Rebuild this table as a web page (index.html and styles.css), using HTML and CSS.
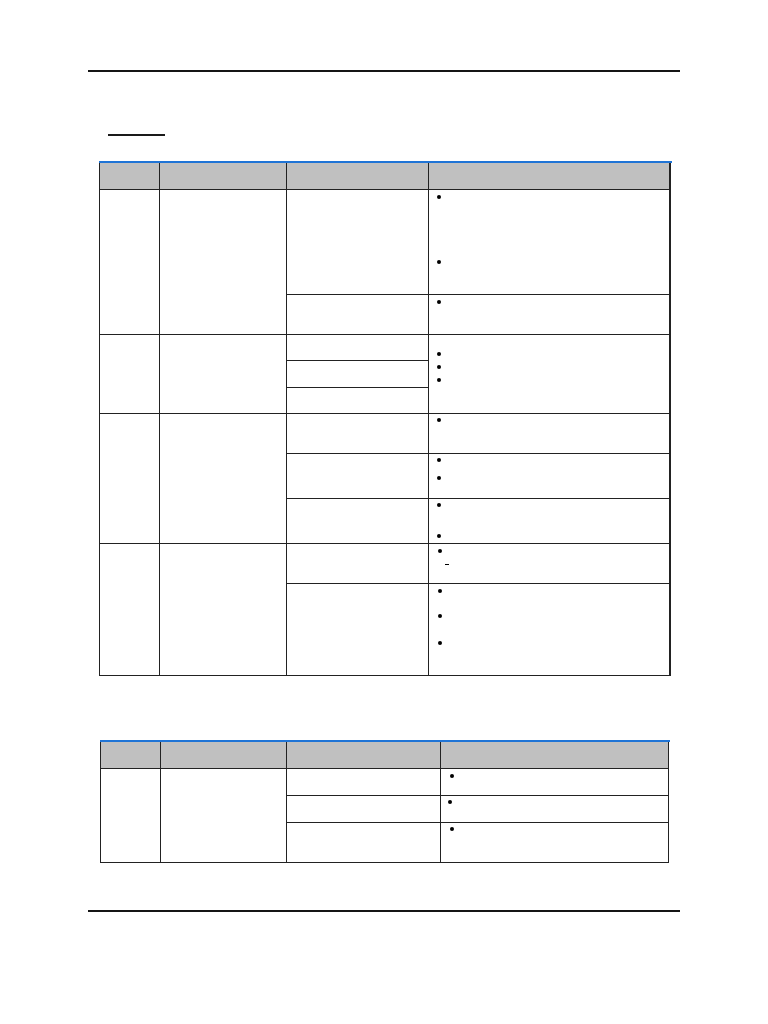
FILE: index.html
```html
<!DOCTYPE html>
<html>
<head>
<meta charset="utf-8">
<link rel="stylesheet" href="styles.css">
</head>
<body>
<div class="page">
  <div class="rule rule-top"></div>
  <div class="heading-line"></div>

  <div class="blue blue-1"></div>
  <div class="grid grid-1">
    <div class="hd"></div><div class="hd"></div><div class="hd"></div><div class="hd"></div>

    <div class="c span2"></div><div class="c span2"></div><div class="c"></div>
    <div class="c"><div class="b m5"></div><div class="b m61"></div></div>
    <div class="c"></div>
    <div class="c"><div class="b m5"></div></div>

    <div class="c span3"></div><div class="c span3"></div><div class="c"></div>
    <div class="c span3"><div class="b m17"></div><div class="b m9"></div><div class="b m9"></div></div>
    <div class="c"></div>
    <div class="c"></div>

    <div class="c span3"></div><div class="c span3"></div><div class="c"></div>
    <div class="c"><div class="b m4"></div></div>
    <div class="c"></div>
    <div class="c"><div class="b m4"></div><div class="b m14"></div></div>
    <div class="c"></div>
    <div class="c"><div class="b m4"></div><div class="b m27"></div></div>

    <div class="c span2"></div><div class="c span2"></div><div class="c"></div>
    <div class="c"><div class="b m5 shift"></div><div class="dash"></div></div>
    <div class="c"></div>
    <div class="c"><div class="b m5 shift"></div><div class="b m21 shift"></div><div class="b m23 shift"></div></div>
  </div>

  <div class="blue blue-2"></div>
  <div class="grid grid-2">
    <div class="hd"></div><div class="hd"></div><div class="hd"></div><div class="hd"></div>
    <div class="c span3"></div><div class="c span3"></div><div class="c"></div>
    <div class="c"><div class="b b2 m5"></div></div>
    <div class="c"></div>
    <div class="c"><div class="b b2l m4"></div></div>
    <div class="c"></div>
    <div class="c"><div class="b b2 m4"></div></div>
  </div>

  <div class="rule rule-bottom"></div>
</div>
</body>
</html>
```

FILE: styles.css
```css
html, body {
  margin: 0;
  padding: 0;
  background: #ffffff;
  font-family: "Liberation Sans", Arial, sans-serif;
}

.page {
  width: 768px;
  height: 1024px;
  padding-top: 70px;
  box-sizing: border-box;
}

.rule {
  height: 2px;
  background: #151515;
  margin-left: 88px;
  width: 592px;
}

.rule-bottom {
  margin-top: 47px;
}

.heading-line {
  margin-top: 62px;
  margin-left: 108px;
  width: 57px;
  height: 2px;
  background: #1a1a1a;
}

.blue {
  height: 2px;
  background: #1f74d6;
}

.blue-1 {
  margin-top: 25px;
  margin-left: 99px;
  width: 573px;
}

.blue-2 {
  margin-top: 64px;
  margin-left: 100px;
  width: 570px;
}

.grid {
  display: grid;
  gap: 1px;
  background: #222222;
  padding: 0 1px 1px 1px;
}

.grid-1 {
  margin-left: 99px;
  width: 569px;
  padding-right: 2px;
  grid-template-columns: 59px 126px 141px 240px;
  grid-template-rows: 26px 104px 39px 25px 26px 25px 39px 44px 44px 39px 91px;
}

.grid-2 {
  margin-left: 100px;
  width: 567px;
  grid-template-columns: 59px 125px 153px 227px;
  grid-template-rows: 26px 26px 26px 39px;
}

.hd {
  background: #c0c0c0;
}

.c {
  background: #ffffff;
  overflow: hidden;
}

.span2 { grid-row: span 2; }
.span3 { grid-row: span 3; }

.b {
  width: 4px;
  height: 4px;
  border-radius: 50%;
  background: #000000;
  margin-left: 8px;
}

.shift { margin-left: 9px; }
.b2 { margin-left: 9px; }
.b2l { margin-left: 7px; }

.dash {
  width: 4px;
  height: 1px;
  background: #000000;
  margin-top: 11px;
  margin-left: 16px;
}

.m4 { margin-top: 4px; }
.m5 { margin-top: 5px; }
.m9 { margin-top: 9px; }
.m14 { margin-top: 14px; }
.m17 { margin-top: 17px; }
.m21 { margin-top: 21px; }
.m23 { margin-top: 23px; }
.m27 { margin-top: 27px; }
.m61 { margin-top: 61px; }
```
